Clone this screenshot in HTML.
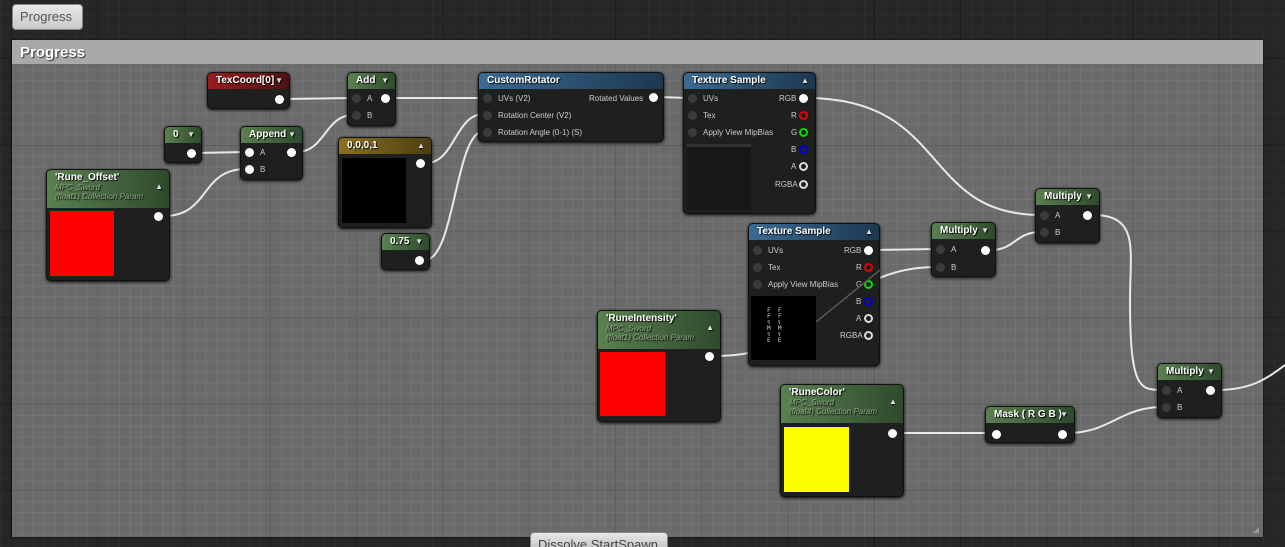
<!DOCTYPE html>
<html style="width:1285px;height:547px;overflow:hidden"><head><meta charset="utf-8"><style>
*{margin:0;padding:0;box-sizing:border-box}
body{width:1285px;height:547px;overflow:hidden;position:relative;font-family:"Liberation Sans",sans-serif;
background-color:#262626;
background-image:linear-gradient(#1c1c1c 1px,transparent 1px),linear-gradient(90deg,#1c1c1c 1px,transparent 1px),linear-gradient(#2c2c2c 1px,transparent 1px),linear-gradient(90deg,#2c2c2c 1px,transparent 1px);
background-size:86.3px 86.3px,86.3px 86.3px,10.8px 10.8px,10.8px 10.8px;background-position:11px 58px}
.cm{position:absolute;left:12px;top:40px;width:1251px;height:497px;background:#6a6a6a;box-shadow:0 0 2px #000}
.cmb{position:absolute;left:0;top:24px;right:0;bottom:0;
background-image:linear-gradient(#5c5c5c 1px,transparent 1px),linear-gradient(90deg,#5c5c5c 1px,transparent 1px),linear-gradient(#747474 1px,transparent 1px),linear-gradient(90deg,#747474 1px,transparent 1px);
background-size:86.3px 86.3px,86.3px 86.3px,10.8px 10.8px,10.8px 10.8px;background-position:-1px 81px}
.cmh{position:absolute;left:0;top:0;right:0;height:24px;background:#a9a9a9;color:#fff;font-weight:bold;font-size:15px;padding:4px 8px;text-shadow:1px 1px 1px #333}
.tab{position:absolute;background:linear-gradient(#e8e8e8,#c9c9c9);border:1px solid #888;border-radius:4px;color:#555;font-size:13px;padding:4px 7px;overflow:hidden;white-space:nowrap}
.n{position:absolute;background:#1e201f;border-radius:5px;box-shadow:0 1px 3px #000;border:1px solid #111}
.h{height:16px;border-radius:4px 4px 0 0;color:#fff;font-size:10px;font-weight:bold;padding:2px 8px;text-shadow:1px 1px 1px #000;position:relative}
.g{background:linear-gradient(90deg,#5a8050,#2e4a2c)}
.r{background:linear-gradient(90deg,#9a1c1c,#4a1212)}
.b{background:linear-gradient(90deg,#3a6a92,#1c3850)}
.y{background:linear-gradient(90deg,#8a7020,#4a3e12)}
.h .t{position:absolute;right:6px;top:3px;font-size:8px;color:#ddd}
.p{position:absolute;width:9px;height:9px;border-radius:50%}
.o{background:#fff}
.i{background:#3a3c3b}
.l{position:absolute;font-size:8px;color:#ccc;white-space:nowrap}
.sub{font-style:italic;font-weight:normal;color:#8fa888;font-size:8px;line-height:9px}
</style></head><body>
<div class="tab" style="left:12px;top:4px;width:71px;height:26px">Progress</div>
<div class="cm"><div class="cmb"></div><div class="cmh">Progress</div>
<div style="position:absolute;right:4px;bottom:3px;color:#999;font-size:8px">◢</div></div>
<div class="tab" style="left:530px;top:532px;width:138px;height:15px;color:#444;border-bottom:none;border-radius:4px 4px 0 0">Dissolve StartSpawn</div>

<svg width="1285" height="547" style="position:absolute;left:0;top:0" fill="none" stroke="#e8e8e8" stroke-width="2">
<path d="M285 99 L353 98"/>
<path d="M196 153 L246 152"/>
<path d="M164 216 C210 216 200 169 246 169"/>
<path d="M297 152 C325 152 325 115 353 115"/>
<path d="M391 98 L484 98"/>
<path d="M426 163 C455 163 455 114 484 114"/>
<path d="M425 260 C455 260 455 131 484 131"/>
<path d="M658 97 L689 98"/>
<path d="M806 98 C950 98 920 215 1041 215"/>
<path d="M870 250 L937 249"/>
<path d="M715 356 C830 356 830 267 937 267"/>
<path d="M991 250 C1015 250 1015 232 1041 232"/>
<path d="M1093 215 C1140 215 1130 250 1130 300 C1130 390 1140 390 1163 390"/>
<path d="M898 433 L991 433"/>
<path d="M1068 433 C1110 433 1120 407 1163 407"/>
<path d="M1216 390 C1250 390 1265 380 1285 365"/>
</svg>

<div class="n" style="left:207px;top:72px;width:83px;height:37px"><div class="h r">TexCoord[0]<span class="t">▼</span></div>
<div class="p o" style="left:67px;top:22px"></div></div>
<div class="n" style="left:347px;top:72px;width:49px;height:54px"><div class="h g">Add<span class="t">▼</span></div>
<div class="p i" style="left:4px;top:21px"></div><div class="l" style="left:19px;top:21px">A</div>
<div class="p i" style="left:4px;top:38px"></div><div class="l" style="left:19px;top:38px">B</div>
<div class="p o" style="left:33px;top:21px"></div></div>
<div class="n" style="left:164px;top:126px;width:38px;height:37px"><div class="h g">0<span class="t">▼</span></div>
<div class="p o" style="left:22px;top:22px"></div></div>
<div class="n" style="left:240px;top:126px;width:63px;height:54px"><div class="h g">Append<span class="t">▼</span></div>
<div class="p o" style="left:4px;top:21px"></div><div class="l" style="left:19px;top:21px">A</div>
<div class="p o" style="left:4px;top:38px"></div><div class="l" style="left:19px;top:38px">B</div>
<div class="p o" style="left:46px;top:21px"></div></div>
<div class="n" style="left:46px;top:169px;width:124px;height:112px"><div class="h g" style="height:38px">'Rune_Offset'<span class="t" style="top:12px">▲</span><div class="sub">MPC_Sword<br>(float1) Collection Param</div></div>
<div style="position:absolute;left:3px;top:41px;width:64px;height:65px;background:#f00"></div>
<div class="p o" style="left:107px;top:42px"></div></div>
<div class="n" style="left:338px;top:137px;width:94px;height:91px"><div class="h y">0,0,0,1<span class="t">▲</span></div>
<div style="position:absolute;left:3px;top:20px;width:64px;height:65px;background:#000"></div>
<div class="p o" style="left:77px;top:21px"></div></div>
<div class="n" style="left:381px;top:233px;width:49px;height:37px"><div class="h g">0.75<span class="t">▼</span></div>
<div class="p o" style="left:33px;top:22px"></div></div>
<div class="n" style="left:478px;top:72px;width:186px;height:70px"><div class="h b">CustomRotator</div>
<div class="p i" style="left:4px;top:21px"></div><div class="l" style="left:19px;top:21px">UVs (V2)</div>
<div class="p i" style="left:4px;top:38px"></div><div class="l" style="left:19px;top:38px">Rotation Center (V2)</div>
<div class="p i" style="left:4px;top:55px"></div><div class="l" style="left:19px;top:55px">Rotation Angle (0-1) (S)</div>
<div class="l" style="left:110px;top:21px">Rotated Values</div><div class="p o" style="left:170px;top:20px"></div></div>
<div class="n" style="left:683px;top:72px;width:133px;height:142px"><div class="h b">Texture Sample<span class="t">▲</span></div>
<div class="p i" style="left:4px;top:21px"></div><div class="l" style="left:19px;top:21px">UVs</div>
<div class="p i" style="left:4px;top:38px"></div><div class="l" style="left:19px;top:38px">Tex</div>
<div class="p i" style="left:4px;top:55px"></div><div class="l" style="left:19px;top:55px">Apply View MipBias</div>
<div class="l" style="left:95px;top:21px">RGB</div><div class="p o" style="left:115px;top:21px"></div>
<div class="l" style="left:107px;top:38px">R</div><div class="p" style="left:115px;top:38px;border:2px solid #e00"></div>
<div class="l" style="left:107px;top:55px">G</div><div class="p" style="left:115px;top:55px;border:2px solid #0d0"></div>
<div class="l" style="left:107px;top:72px">B</div><div class="p" style="left:115px;top:72px;border:2px solid #00d"></div>
<div class="l" style="left:107px;top:89px">A</div><div class="p" style="left:115px;top:89px;border:2px solid #ddd"></div>
<div class="l" style="left:91px;top:107px">RGBA</div><div class="p" style="left:115px;top:107px;border:2px solid #ddd"></div>
<div style="position:absolute;left:3px;top:71px;width:64px;height:66px;background:#181818;border-top:3px solid #333"></div></div>
<div class="n" style="left:748px;top:223px;width:132px;height:143px"><div class="h b">Texture Sample<span class="t">▲</span></div>
<div class="p i" style="left:4px;top:22px"></div><div class="l" style="left:19px;top:22px">UVs</div>
<div class="p i" style="left:4px;top:39px"></div><div class="l" style="left:19px;top:39px">Tex</div>
<div class="p i" style="left:4px;top:56px"></div><div class="l" style="left:19px;top:56px">Apply View MipBias</div>
<div class="l" style="left:95px;top:22px">RGB</div><div class="p o" style="left:115px;top:22px"></div>
<div class="l" style="left:107px;top:39px">R</div><div class="p" style="left:115px;top:39px;border:2px solid #e00"></div>
<div class="l" style="left:107px;top:56px">G</div><div class="p" style="left:115px;top:56px;border:2px solid #0d0"></div>
<div class="l" style="left:107px;top:73px">B</div><div class="p" style="left:115px;top:73px;border:2px solid #00d"></div>
<div class="l" style="left:107px;top:90px">A</div><div class="p" style="left:115px;top:90px;border:2px solid #ddd"></div>
<div class="l" style="left:91px;top:107px">RGBA</div><div class="p" style="left:115px;top:107px;border:2px solid #ddd"></div>
<div style="position:absolute;left:2px;top:72px;width:65px;height:64px;background:#000;color:#ccc;font-size:6px;line-height:6px;padding:12px 0 0 16px;font-family:'DejaVu Sans Mono',monospace">F&nbsp;&nbsp;F<br>F&nbsp;&nbsp;F<br>ร&nbsp;&nbsp;ร<br>M&nbsp;&nbsp;M<br>ร&nbsp;&nbsp;ร<br>E&nbsp;&nbsp;E</div>
<svg style="position:absolute;left:67px;top:20px" width="64" height="80"><path d="M0 78 L64 26" stroke="#555" stroke-width="1.5"/></svg></div>
<div class="n" style="left:597px;top:310px;width:124px;height:112px"><div class="h g" style="height:38px">'RuneIntensity'<span class="t" style="top:12px">▲</span><div class="sub">MPC_Sword<br>(float1) Collection Param</div></div>
<div style="position:absolute;left:2px;top:41px;width:65px;height:64px;background:#f00"></div>
<div class="p o" style="left:107px;top:41px"></div></div>
<div class="n" style="left:780px;top:384px;width:124px;height:113px"><div class="h g" style="height:38px">'RuneColor'<span class="t" style="top:12px">▲</span><div class="sub">MPC_Sword<br>(float4) Collection Param</div></div>
<div style="position:absolute;left:3px;top:42px;width:65px;height:65px;background:#ff0"></div>
<div class="p o" style="left:107px;top:44px"></div></div>
<div class="n" style="left:931px;top:222px;width:65px;height:55px"><div class="h g">Multiply<span class="t">▼</span></div>
<div class="p i" style="left:4px;top:22px"></div><div class="l" style="left:19px;top:22px">A</div>
<div class="p i" style="left:4px;top:40px"></div><div class="l" style="left:19px;top:40px">B</div>
<div class="p o" style="left:49px;top:23px"></div></div>
<div class="n" style="left:1035px;top:188px;width:65px;height:55px"><div class="h g">Multiply<span class="t">▼</span></div>
<div class="p i" style="left:4px;top:22px"></div><div class="l" style="left:19px;top:22px">A</div>
<div class="p i" style="left:4px;top:39px"></div><div class="l" style="left:19px;top:39px">B</div>
<div class="p o" style="left:47px;top:22px"></div></div>
<div class="n" style="left:985px;top:406px;width:90px;height:37px"><div class="h g">Mask ( R G B )<span class="t">▼</span></div>
<div class="p o" style="left:6px;top:23px"></div><div class="p o" style="left:72px;top:23px"></div></div>
<div class="n" style="left:1157px;top:363px;width:65px;height:55px"><div class="h g">Multiply<span class="t">▼</span></div>
<div class="p i" style="left:4px;top:22px"></div><div class="l" style="left:19px;top:22px">A</div>
<div class="p i" style="left:4px;top:39px"></div><div class="l" style="left:19px;top:39px">B</div>
<div class="p o" style="left:48px;top:22px"></div></div>
</body></html>
